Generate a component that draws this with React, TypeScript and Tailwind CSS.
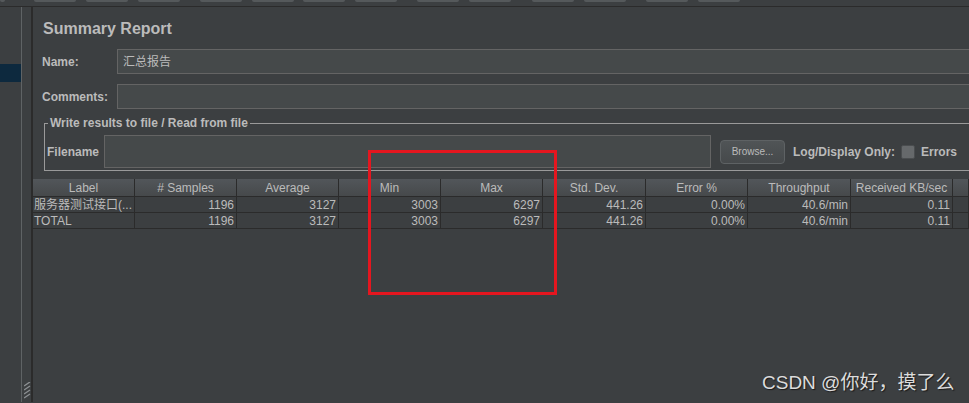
import React from 'react';

const font = "font-['Liberation_Sans','Noto_Sans_CJK_SC',sans-serif]";

const columns = [
  'Label',
  '# Samples',
  'Average',
  'Min',
  'Max',
  'Std. Dev.',
  'Error %',
  'Throughput',
  'Received KB/sec',
  '',
];

const rows = [
  ['服务器测试接口(...', '1196', '3127', '3003', '6297', '441.26', '0.00%', '40.6/min', '0.11', ''],
  ['TOTAL', '1196', '3127', '3003', '6297', '441.26', '0.00%', '40.6/min', '0.11', ''],
];

const gridCols =
  'grid grid-cols-[102px_102px_102px_102px_102px_103px_102px_103px_102px_1fr]';

function Toolbar() {
  return (
    <div className="flex h-[7px] items-start border-b border-[#2b2b2b]">
      <div className="h-[2px] w-[5px] rounded-b bg-[#55595b]" />
      <div className="ml-[29px] h-[2px] w-[42px] rounded-b bg-[#55595b]" />
      <div className="ml-[10px] h-[2px] w-[42px] rounded-b bg-[#55595b]" />
      <div className="ml-[10px] h-[2px] w-[42px] rounded-b bg-[#55595b]" />
      <div className="ml-[20px] h-[2px] w-[42px] rounded-b bg-[#55595b]" />
      <div className="ml-[10px] h-[2px] w-[42px] rounded-b bg-[#55595b]" />
      <div className="ml-[9px] h-[2px] w-[42px] rounded-b bg-[#55595b]" />
      <div className="ml-[10px] h-[2px] w-[42px] rounded-b bg-[#55595b]" />
      <div className="ml-[20px] h-[2px] w-[42px] rounded-b bg-[#55595b]" />
      <div className="ml-[10px] h-[2px] w-[42px] rounded-b bg-[#55595b]" />
      <div className="ml-[21px] h-[2px] w-[42px] rounded-b bg-[#55595b]" />
      <div className="ml-[10px] h-[2px] w-[42px] rounded-b bg-[#55595b]" />
      <div className="ml-[20px] h-[2px] w-[42px] rounded-b bg-[#55595b]" />
      <div className="ml-[10px] h-[2px] w-[42px] rounded-b bg-[#55595b]" />
    </div>
  );
}

function Grip() {
  return (
    <svg width="7" height="17" viewBox="0 0 7 17">
      {[0, 4, 8, 12].map((y) => (
        <path key={y} d={`M0 ${y + 4} L6 ${y}`} stroke="#8d9193" strokeWidth="1.4" />
      ))}
    </svg>
  );
}

function TextRow({ label, children }: { label: string; children?: React.ReactNode }) {
  return (
    <div className="flex h-[25px] items-center">
      <div className="w-[84px] shrink-0 whitespace-nowrap pl-[9px] font-bold">{label}</div>
      <div className="flex h-full min-w-0 flex-1 items-center border border-r-0 border-[#646464] bg-[#45494a] pl-[5px] text-[12px]">
        {children}
      </div>
    </div>
  );
}

function ResultsTable() {
  return (
    <div className="mt-[8px]">
      <div className={`${gridCols} h-[18px] border-b border-[#2b2b2b] bg-gradient-to-b from-[#52565a] to-[#46494b]`}>
        {columns.map((c, i) => (
          <div
            key={i}
            className="flex items-center justify-center overflow-hidden whitespace-nowrap border-r border-[#2b2b2b] leading-[16px]"
          >
            {c}
          </div>
        ))}
      </div>
      {rows.map((r, ri) => (
        <div key={ri} className={`${gridCols} h-[16px] border-b border-[#2b2b2b]`}>
          {r.map((cell, ci) => (
            <div
              key={ci}
              className={
                ci === 0
                  ? 'overflow-hidden whitespace-nowrap border-r border-[#2b2b2b] pl-[1px] leading-[16px]'
                  : 'overflow-hidden whitespace-nowrap border-r border-[#2b2b2b] pr-[2px] text-right leading-[16px]'
              }
            >
              {cell}
            </div>
          ))}
        </div>
      ))}
    </div>
  );
}

export default function App() {
  return (
    <div className={`relative h-[403px] w-[969px] overflow-hidden bg-[#3c3f41] text-[12px] text-[#bbbbbb] ${font}`}>
      <Toolbar />
      <div className="flex h-[395px]">
        {/* tree panel */}
        <div className="w-[21px] pt-[57px]">
          <div className="h-[18px] bg-[#0d293e]" />
        </div>
        {/* splitter */}
        <div className="flex w-[12px] flex-col justify-end border-l border-r-2 border-l-[#5f6365] border-r-[#2b2b2b] pb-[3px] pl-[2px]">
          <Grip />
        </div>
        {/* content */}
        <div className="flex min-w-0 flex-1 flex-col">
          <div className="ml-[10px] mt-[12px] text-[16px] font-bold leading-[19px]">Summary Report</div>
          <div className="mt-[11px]">
            <TextRow label="Name:">汇总报告</TextRow>
          </div>
          <div className="mt-[10px]">
            <TextRow label="Comments:" />
          </div>
          <fieldset className="ml-[11px] mt-[7px] border border-r-0 border-[#9a9a9a]">
            <legend className="ml-[3px] px-[2px] font-bold leading-[14px]">
              Write results to file / Read from file
            </legend>
            <div className="flex items-center pb-[2px] pl-[2px] pt-[5px]">
              <div className="w-[57px] shrink-0 font-bold">Filename</div>
              <div className="h-[33px] w-[607px] shrink-0 border border-[#646464] bg-[#45494a]" />
              <button className="ml-[9px] flex h-[24px] w-[65px] shrink-0 items-center justify-center rounded-[4px] border border-[#5e6264] bg-gradient-to-b from-[#505456] to-[#46494b] text-[10px] text-[#bbbbbb]">
                Browse...
              </button>
              <div className="ml-[8px] whitespace-nowrap font-bold">Log/Display Only:</div>
              <div className="ml-[6px] h-[14px] w-[14px] shrink-0 rounded-[2px] border border-[#4a4d4f] bg-[#66696b]" />
              <div className="ml-[6px] font-bold">Errors</div>
            </div>
          </fieldset>
          <ResultsTable />
        </div>
      </div>

      {/* annotation overlay */}
      <div className="pointer-events-none absolute left-[762px] top-[369px] whitespace-nowrap text-[19px] text-[#dcdcdc] [text-shadow:1px_1px_1px_#1a1a1a]">
        CSDN @你好，摸了么
      </div>
      <div className="pointer-events-none absolute left-[368px] top-[150px] h-[145px] w-[189px] border-[3px] border-[#e5161f]" />
    </div>
  );
}
